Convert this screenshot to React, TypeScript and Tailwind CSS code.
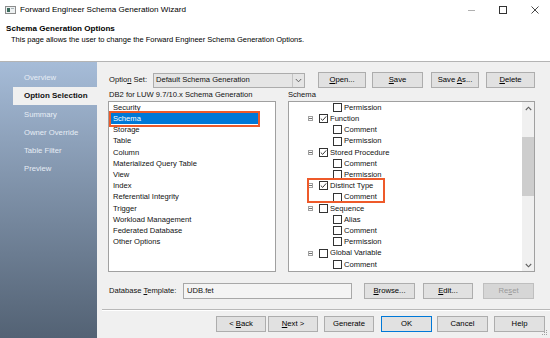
import type { ReactNode } from 'react'

type Node = { label: string; parent?: boolean; checked?: boolean }

const navItems = ['Overview', 'Option Selection', 'Summary', 'Owner Override', 'Table Filter', 'Preview']

const listItems = [
  'Security',
  'Schema',
  'Storage',
  'Table',
  'Column',
  'Materialized Query Table',
  'View',
  'Index',
  'Referential Integrity',
  'Trigger',
  'Workload Management',
  'Federated Database',
  'Other Options',
]

const treeTop: Node[] = [
  { label: 'Permission' },
  { label: 'Function', parent: true, checked: true },
  { label: 'Comment' },
  { label: 'Permission' },
  { label: 'Stored Procedure', parent: true, checked: true },
  { label: 'Comment' },
  { label: 'Permission' },
]

const treeMarked: Node[] = [
  { label: 'Distinct Type', parent: true, checked: true },
  { label: 'Comment' },
]

const treeBottom: Node[] = [
  { label: 'Sequence', parent: true },
  { label: 'Alias' },
  { label: 'Comment' },
  { label: 'Permission' },
  { label: 'Global Variable', parent: true },
  { label: 'Comment' },
  { label: 'Permission' },
]

function Btn({
  children,
  className = '',
  primary,
  disabled,
}: {
  children: ReactNode
  className?: string
  primary?: boolean
  disabled?: boolean
}) {
  const tone = primary
    ? 'border-[#0078d7] bg-[#e1e1e1] text-black'
    : disabled
      ? 'border-[#bfbfbf] bg-[#d6d6d6] text-[#9a9a9a]'
      : 'border-[#adadad] bg-[#e1e1e1] text-black'
  return (
    <div className={`flex h-[16px] shrink-0 items-center justify-center border text-[7.7px] ${tone} ${className}`}>
      <span className="whitespace-pre">{children}</span>
    </div>
  )
}

function Check({ checked }: { checked?: boolean }) {
  return (
    <span className="flex h-[9px] w-[9px] shrink-0 items-center justify-center border border-[#333333] bg-white">
      {checked && (
        <svg width="7" height="7" viewBox="0 0 7 7">
          <polyline points="0.8,3.6 2.7,5.4 6.2,1.4" fill="none" stroke="#222222" strokeWidth="0.9" />
        </svg>
      )}
    </span>
  )
}

function TreeRow({ node }: { node: Node }) {
  if (node.parent) {
    return (
      <div className="flex h-[11.2px] items-center pl-[19px]">
        <span className="flex h-[5px] w-[5px] shrink-0 items-center justify-center border border-[#a0a0a0] bg-white">
          <span className="h-px w-[3px] bg-[#707070]" />
        </span>
        <span className="ml-[6px]">
          <Check checked={node.checked} />
        </span>
        <span className="ml-[2px] whitespace-nowrap">{node.label}</span>
      </div>
    )
  }
  return (
    <div className="flex h-[11.2px] items-center pl-[44px]">
      <Check />
      <span className="ml-[2px] whitespace-nowrap">{node.label}</span>
    </div>
  )
}

function Chevron({ up }: { up?: boolean }) {
  return (
    <svg width="7" height="5" viewBox="0 0 7 5">
      <polyline
        points={up ? '0.8,4 3.5,1.2 6.2,4' : '0.8,1 3.5,3.8 6.2,1'}
        fill="none"
        stroke="#606060"
        strokeWidth="1.1"
      />
    </svg>
  )
}

export default function App() {
  return (
    <div className="relative flex h-[338px] w-[550px] flex-col overflow-hidden bg-white font-['Liberation_Sans',Arial,sans-serif] text-black">
      {/* title bar */}
      <div className="flex h-[20px] shrink-0 items-center pl-[5px]">
        <svg width="11" height="8" viewBox="0 0 11 8">
          <rect x="0.5" y="0.5" width="10" height="7" fill="#eef1f2" stroke="#8c8c8c" />
          <rect x="2" y="2" width="3" height="4" fill="#3b6b5c" />
          <rect x="6" y="2" width="3" height="1" fill="#a8b4b8" />
        </svg>
        <span className="ml-[4px] text-[8.1px]">Forward Engineer Schema Generation Wizard</span>
        <div className="ml-auto flex items-center">
          <span className="h-px w-[7px] bg-[#b0b0b0]" />
          <span className="ml-[24px] h-[8px] w-[8px] border border-[#333333]" />
          <svg className="ml-[24px] mr-[11px]" width="8" height="8" viewBox="0 0 8 8">
            <path d="M0.5 0.5 L7.5 7.5 M7.5 0.5 L0.5 7.5" stroke="#333333" strokeWidth="0.9" />
          </svg>
        </div>
      </div>

      {/* header */}
      <div className="flex h-[42px] shrink-0 flex-col border-b border-[#b4b4b4] pl-[6px] pt-[4px]">
        <span className="text-[8.1px] leading-[10px] font-bold">Schema Generation Options</span>
        <span className="mt-[1px] pl-[5px] text-[7.5px] leading-[10px]">
          This page allows the user to change the Forward Engineer Schema Generation Options.
        </span>
      </div>

      {/* body */}
      <div className="flex min-h-0 flex-1">
        <nav className="w-[97px] shrink-0 bg-linear-to-b from-[#a6bcd8] to-[#536274] pt-[7px]">
          {navItems.map((item) =>
            item === 'Option Selection' ? (
              <div key={item} className="ml-[13px] flex h-[18.2px] items-center bg-[#f0f0f0] pl-[11px] text-[8px] font-bold text-[#111111]">
                {item}
              </div>
            ) : (
              <div key={item} className="flex h-[18.2px] items-center pl-[24px] text-[7.7px] text-[#e6edf5]">
                {item}
              </div>
            ),
          )}
        </nav>

        <main className="flex flex-1 flex-col bg-[#f0f0f0] pl-[11px] pt-[10px] text-[7.6px] text-[#111111]">
          {/* option set row */}
          <div className="flex h-[16px] items-center">
            <span className="w-[45px] pl-[1px]">
              Optio<u>n</u> Set:
            </span>
            <div className="flex h-[15px] w-[152px] items-center border border-[#acacac] bg-[#e5e5e5]">
              <span className="flex-1 pl-[2px]">Default Schema Generation</span>
              <span className="flex h-full w-[12px] items-center justify-center border-l border-[#c4c4c4]">
                <svg width="7" height="5" viewBox="0 0 7 5">
                  <polyline points="0.8,1 3.5,3.8 6.2,1" fill="none" stroke="#555555" strokeWidth="0.9" />
                </svg>
              </span>
            </div>
            <Btn className="ml-[13px] w-[48px]">
              <u>O</u>pen...
            </Btn>
            <Btn className="ml-[6px] w-[51px]">
              <u>S</u>ave
            </Btn>
            <Btn className="ml-[8px] w-[48px]">
              Save <u>A</u>s...
            </Btn>
            <Btn className="ml-[7px] w-[49px]">
              <u>D</u>elete
            </Btn>
          </div>

          {/* lists */}
          <div className="flex">
            <div className="flex w-[168px] flex-col">
              <span className="flex h-[13px] items-center pl-[1px]">DB2 for LUW 9.7/10.x Schema Generation</span>
              <div className="h-[171px] border border-[#a0a0a0] bg-white">
                {listItems.map((item) =>
                  item === 'Schema' ? (
                    <div key={item} className="relative ml-[2px] flex h-[11.2px] w-[147px] items-center bg-[#0078d7] pl-[2px] text-white">
                      {item}
                      <span className="absolute -top-[2px] -right-[2px] -bottom-[3px] -left-[2px] border-2 border-[#ee5a2a]" />
                    </div>
                  ) : (
                    <div key={item} className="flex h-[11.2px] items-center pl-[4px]">
                      {item}
                    </div>
                  ),
                )}
              </div>
            </div>

            <div className="ml-[12px] flex w-[247px] flex-col">
              <span className="flex h-[13px] items-center">Schema</span>
              <div className="flex h-[171px] border border-[#a0a0a0] bg-white">
                <div className="flex-1 overflow-hidden">
                  {treeTop.map((n, i) => (
                    <TreeRow key={`t${i}`} node={n} />
                  ))}
                  <div className="relative">
                    {treeMarked.map((n, i) => (
                      <TreeRow key={`m${i}`} node={n} />
                    ))}
                    <span className="absolute -top-[2px] bottom-0 left-[18px] w-[78px] border-2 border-[#ee5a2a]" />
                  </div>
                  {treeBottom.map((n, i) => (
                    <TreeRow key={`b${i}`} node={n} />
                  ))}
                </div>
                <div className="flex w-[12px] flex-col bg-[#f0f0f0]">
                  <span className="flex h-[12px] items-center justify-center">
                    <Chevron up />
                  </span>
                  <span className="mt-[23px] h-[59px] bg-[#cdcdcd]" />
                  <span className="flex-1" />
                  <span className="flex h-[12px] items-center justify-center">
                    <Chevron />
                  </span>
                </div>
              </div>
            </div>
          </div>

          {/* template row */}
          <div className="mt-[11px] flex h-[16px] items-center">
            <span className="w-[75px] pl-[1px]">
              Database <u>T</u>emplate:
            </span>
            <div className="flex h-[16px] w-[169px] items-center border border-[#a8a8a8] bg-[#f4f4f4] pl-[3px]">UDB.fet</div>
            <Btn className="ml-[12px] w-[51px]">
              <u>B</u>rowse...
            </Btn>
            <Btn className="ml-[8px] w-[50px]">
              <u>E</u>dit...
            </Btn>
            <Btn disabled className="ml-[10px] w-[51px]">
              Re<u>s</u>et
            </Btn>
          </div>

          <div className="-ml-[6px] mt-[10px] h-[2px] border-t border-b border-t-[#b8b8b8] border-b-white" />

          {/* wizard buttons */}
          <div className="mt-[5px] flex -ml-[11px]">
            <Btn className="ml-[119px] w-[50px]">
              &lt; <u>B</u>ack
            </Btn>
            <Btn className="ml-[2px] w-[50px]">
              <u>N</u>ext &gt;
            </Btn>
            <Btn className="ml-[6px] w-[50px]">Generate</Btn>
            <Btn primary className="ml-[7px] w-[51px]">
              OK
            </Btn>
            <Btn className="ml-[5px] w-[51px]">Cancel</Btn>
            <Btn className="ml-[6px] w-[51px]">Help</Btn>
          </div>
        </main>
      </div>

      <svg className="absolute right-[2px] bottom-[2px]" width="7" height="7" viewBox="0 0 7 7">
        <rect x="5" y="1" width="1" height="1" fill="#a0a0a0" />
        <rect x="3" y="3" width="1" height="1" fill="#a0a0a0" />
        <rect x="5" y="3" width="1" height="1" fill="#a0a0a0" />
        <rect x="1" y="5" width="1" height="1" fill="#a0a0a0" />
        <rect x="3" y="5" width="1" height="1" fill="#a0a0a0" />
        <rect x="5" y="5" width="1" height="1" fill="#a0a0a0" />
      </svg>
    </div>
  )
}
